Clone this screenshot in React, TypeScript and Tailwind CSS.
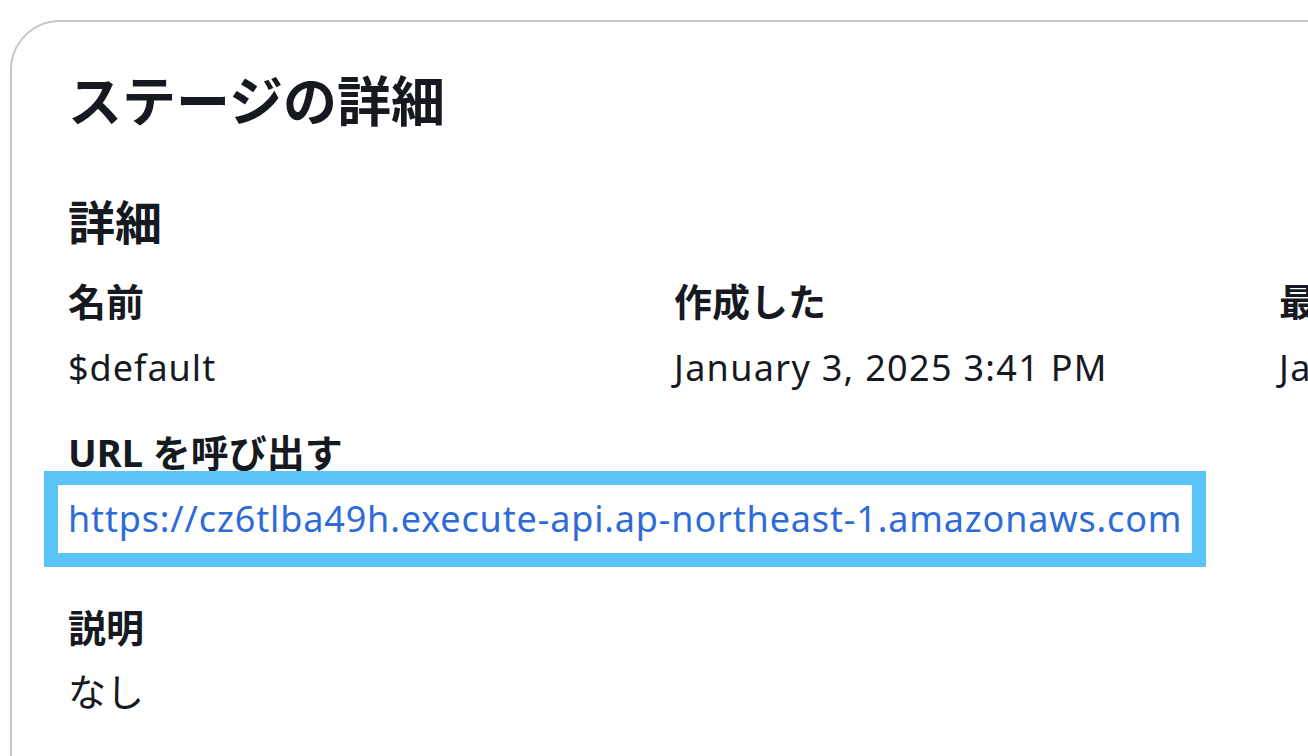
import React from "react";

const font = '"Noto Sans", "Noto Sans CJK JP", sans-serif';

export default function App() {
  return (
    <div className="w-[1308px] h-[756px] overflow-hidden bg-white text-[#16191f]" style={{ fontFamily: font }}>
      <div className="ml-[10px] mt-[20px] w-[1400px] h-[800px] border-2 border-[#c6c6cd] rounded-tl-[50px] pl-[56px] pt-[49px]">
        <h1 className="text-[54px] leading-[60px] font-bold">ステージの詳細</h1>
        <h2 className="mt-[63px] text-[47px] leading-[56px] font-bold">詳細</h2>
        <div className="mt-[29px] flex">
          <div className="w-[606px] shrink-0">
            <div className="text-[38px] leading-[44px] font-bold">名前</div>
            <div className="mt-[23px] text-[36px] leading-[44px] tracking-[1px]">$default</div>
          </div>
          <div className="w-[605px] shrink-0">
            <div className="text-[38px] leading-[44px] font-bold">作成した</div>
            <div className="mt-[23px] text-[36px] leading-[44px] tracking-[1.3px]">January 3, 2025 3:41 PM</div>
          </div>
          <div className="shrink-0">
            <div className="text-[38px] leading-[44px] font-bold">最終更新日</div>
            <div className="mt-[23px] text-[36px] leading-[44px] tracking-[1.3px]">January 3, 2025 3:41 PM</div>
          </div>
        </div>
        <div className="mt-[40px] text-[38px] leading-[44px] font-bold">URL を呼び出す</div>
        <div className="-mt-[3px] -ml-[24px] inline-flex border-[14px] border-[#5bc4f6] bg-white h-[96px] items-center px-[10px]">
          <a className="text-[36px] leading-[44px] tracking-[0.85px] text-[#2e6bd9]">https://cz6tlba49h.execute-api.ap-northeast-1.amazonaws.com</a>
        </div>
        <div className="mt-[38px] text-[38px] leading-[44px] font-bold">説明</div>
        <div className="mt-[20px] text-[38px] leading-[44px]">なし</div>
      </div>
    </div>
  );
}
